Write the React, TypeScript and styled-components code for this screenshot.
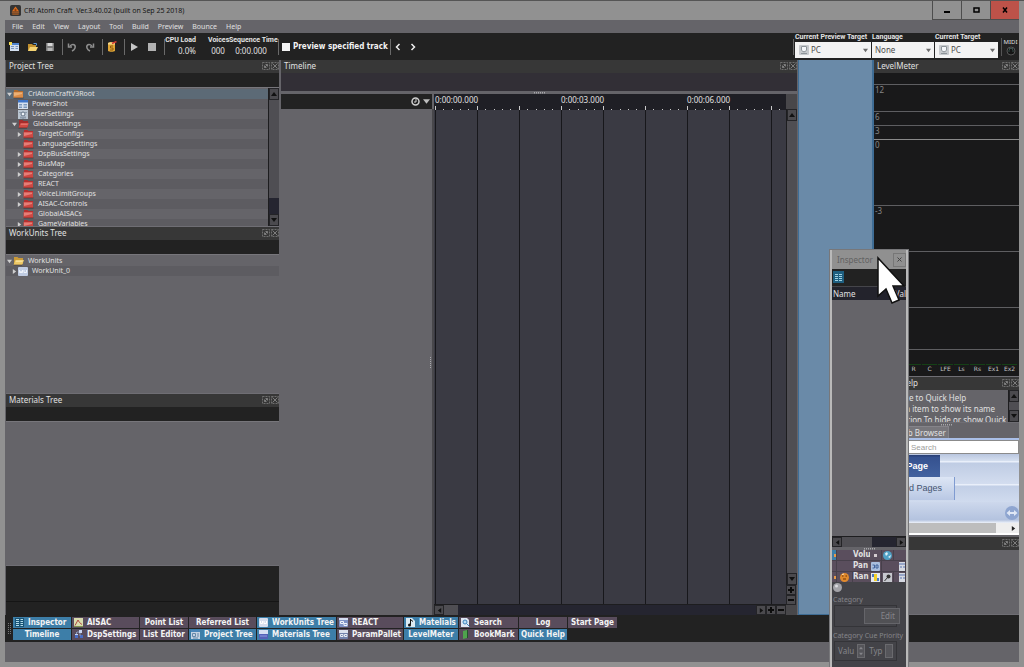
import React from "react";
import styled, { createGlobalStyle, css } from "styled-components";

const ui = `"Noto Sans", "Open Sans", sans-serif`;
const boldUi = `"DejaVu Sans Condensed", "DejaVu Sans", sans-serif`;
const tiny = `Roboto, "Liberation Sans", sans-serif`;

const c = {
  frame: "#919191",
  panel: "#656469",
  panelDark: "#5d5c61",
  header: "#373737",
  dark: "#222222",
  darker: "#19191a",
  grid: "#3a3a43",
  text: "#e0e0e0",
  blue: "#6a8aa8",
  active: "#3d7ea8",
  idle: "#594c5c",
  line: "#6f6e74",
};

const Global = createGlobalStyle`
  * { box-sizing: border-box; }
  html, body { margin: 0; padding: 0; }
  body { background: ${c.panel}; color: ${c.text}; font: 8px/10px ${ui}; }
  button, input, select { font: inherit; color: inherit; margin: 0; padding: 0; border: 0; background: none; border-radius: 0; }
  ul { list-style: none; margin: 0; padding: 0; }
  svg { display: block; flex: none; }
`;

/* ---------- window ---------- */

const Window = styled.div`
  position: relative;
  display: flex;
  flex-direction: column;
  min-height: 100vh;
  overflow: hidden;
  padding: 0 5px 5px;
  background: ${c.frame};
  border-top: 1px solid #555;
`;

const TitleBar = styled.header`
  display: flex;
  height: 19px;
  align-items: center;
  gap: 3px;
  padding-left: 5px;
  color: #161616;
  font: 7px/10px ${ui};
  white-space: pre;
`;

const TitleText = styled.h1`
  flex: 1;
  margin: 0;
  font: inherit;
`;

const WindowButtons = styled.div`
  display: flex;
  align-self: stretch;
`;

const WindowButton = styled.button<{ $close?: boolean }>`
  display: grid;
  place-items: center;
  width: 29px;
  border: 1px solid #4d4d4d;
  border-width: 0 0 1px 1px;
  background: ${(p) => (p.$close ? "#bd5249" : "transparent")};
  color: #000;
`;

const MenuBar = styled.nav`
  display: flex;
  height: 13px;
  align-items: center;
  gap: 9px;
  padding-left: 7px;
  background: ${c.panel};
  font: 7px/10px ${ui};
`;

/* ---------- toolbar ---------- */

const Toolbar = styled.div`
  display: flex;
  height: 27px;
  align-items: center;
  background: ${c.dark};
`;

const ToolGroup = styled.div`
  display: flex;
  gap: 6px;
  padding: 0 6px 0 3px;
`;

const ToolButton = styled.button`
  display: grid;
  place-items: center;
  width: 12px;
  height: 14px;
`;

const Divider = styled.span`
  width: 1px;
  height: 16px;
  background: #6a6a6a;
`;

const Stat = styled.div<{ $width: number; $centered?: boolean }>`
  width: ${(p) => p.$width}px;
  margin-left: ${(p) => (p.$centered ? 1 : 0)}px;
  text-align: ${(p) => (p.$centered ? "center" : "right")};
  font: 8px/12px ${ui};
`;

const Stats = styled.div`
  display: flex;
  padding-right: 5px;
  > :nth-child(2) { margin-left: 12px; }
`;

const SmallLabel = styled.span`
  display: block;
  font: bold 7px/9px ${tiny};
  white-space: nowrap;
  color: #e4e4e4;
`;

const TrackCheck = styled.label`
  display: flex;
  align-items: center;
  gap: 3px;
  padding: 0 2px 0 3px;
  font: bold 8px/12px ${boldUi};
  color: #f2f2f2;
  input {
    appearance: none;
    width: 8px;
    height: 8px;
    background: #f4f4f4;
  }
`;

const StepGroup = styled.div`
  display: flex;
  gap: 3px;
  padding-left: 1px;
`;

const Spacer = styled.div`
  flex: 1;
`;

const Field = styled.label<{ $width: number }>`
  display: block;
  width: ${(p) => p.$width}px;
  margin-left: 1px;
  align-self: flex-end;
`;

const SelectBox = styled.span`
  position: relative;
  display: flex;
  align-items: center;
  height: 16px;
  margin-bottom: 2px;
  background: #f3f3f3;
  > svg:first-child { position: absolute; left: 4px; }
  > svg:last-child { position: absolute; right: 3px; pointer-events: none; }
`;

const Select = styled.select<{ $icon?: boolean }>`
  appearance: none;
  width: 100%;
  height: 16px;
  padding-left: ${(p) => (p.$icon ? 16 : 3)}px;
  font: 8px/16px ${ui};
  color: #4c4c4c;
`;

const Midi = styled.div`
  display: flex;
  flex-direction: column;
  align-items: center;
  margin-left: 3px;
  width: 18px;
  font: 6px/8px ${ui};
  border-left: 1px solid #555;
`;

/* ---------- docks ---------- */

const Docks = styled.main`
  flex: 1 1 555px;
  display: grid;
  grid-template-columns: 273px minmax(0, 1fr) 76px 145px;
  padding-left: 1px;
  min-height: 555px;
  background: ${c.panel};
`;

const Column = styled.div`
  display: flex;
  flex-direction: column;
  min-width: 0;
  min-height: 0;
`;

const Panel = styled.section<{ $size: number }>`
  display: flex;
  flex-direction: column;
  flex: ${(p) => `${p.$size} 1 ${p.$size}px`};
  min-height: 0;
  overflow: hidden;
  border-bottom: 1px solid ${c.line};
`;

const Header = styled.div`
  display: flex;
  flex: none;
  height: 13px;
  align-items: flex-start;
  gap: 1px;
  padding: 2px 0 0 3px;
  background: ${c.header};
  h2 { flex: 1; margin: -1px 0 0; font: 8px/10px ${ui}; white-space: nowrap; }
`;

const DockButton = styled.button`
  display: block;
`;

const Strip = styled.div<{ $height: number }>`
  flex: none;
  height: ${(p) => p.$height}px;
  background: ${c.dark};
`;

const TreeArea = styled.div`
  display: flex;
  flex: 1;
  min-height: 0;
  overflow: hidden;
  border-top: 1px solid #77767b;
`;

const Tree = styled.ul`
  flex: 1;
  padding-top: 1px;
  font: 7px/10px ${ui};
`;

const TreeRow = styled.li<{ $depth: number; $selected?: boolean }>`
  display: flex;
  align-items: center;
  height: 10px;
  gap: 1px;
  padding-left: ${(p) => 1 + p.$depth * 5}px;
  background: ${(p) => (p.$selected ? "#5c6a76" : c.panel)};
  &:nth-child(even) { background: ${c.panelDark}; }
  span { margin-left: 3px; }
`;

const DarkFooter = styled.div`
  flex: none;
  height: 49px;
  padding-top: 35px;
  background: ${c.dark};
  &::before { content: ""; display: block; border-top: 1px solid #151515; }
`;

/* ---------- scroll bars ---------- */

const ScrollButton = styled.button`
  display: grid;
  place-items: center;
  flex: none;
  width: 10px;
  height: 10px;
  background: #4b4a4e;
  border: 1px solid #242427;
  color: #111;
`;

const Scroll = styled.div<{ $vertical?: boolean }>`
  display: flex;
  flex: none;
  background: #252530;
  ${(p) =>
    p.$vertical
      ? css`flex-direction: column; width: 11px; border-left: 1px solid #1d1d1f; ${ScrollButton} { height: 12px; }`
      : css`height: 11px; border-top: 1px solid #1d1d1f;`}
`;

const Thumb = styled.div<{ $grow: number }>`
  flex: ${(p) => p.$grow} 1 0;
  background: #4f4e53;
`;

const Track = styled.div<{ $grow: number }>`
  flex: ${(p) => p.$grow} 1 0;
`;

/* ---------- timeline ---------- */

const Center = styled(Column)`
  padding: 0 1px 0 2px;
`;

const TimelineStrip = styled.div`
  height: 18px;
  background: #322f36;
`;

const Splitter = styled.div`
  display: grid;
  place-items: center;
  flex: none;
  height: 3px;
`;

const TimelineBody = styled.div`
  display: grid;
  flex: 1;
  grid-template-columns: 153px minmax(0, 1fr) 11px;
  min-height: 0;
`;

const TrackHead = styled.div`
  display: flex;
  justify-content: flex-end;
  align-items: center;
  gap: 3px;
  height: 15px;
  margin-right: 2px;
  padding-right: 2px;
  background: ${c.dark};
`;

const TrackList = styled.div`
  display: grid;
  grid-template-rows: 15px 1fr;
`;

const TrackSpace = styled.div`
  display: grid;
  justify-content: end;
  align-content: center;
  border-right: 2px solid #48474b;
`;

const Ruler = styled.div`
  display: flex;
  flex-direction: column;
  justify-content: space-between;
  height: 16px;
  background: #1f1f25;
  overflow: hidden;
`;

const RulerLabels = styled.div`
  display: flex;
  span { flex: 0 0 126px; padding-left: 1px; font: 8px/12px ${ui}; }
`;

const TimeGrid = styled.div`
  flex: 1;
  background: repeating-linear-gradient(90deg, #17171b 0 1px, ${c.grid} 1px 42px);
  border-left: 1px solid ${c.grid};
`;

const TimelineEnd = styled.div`
  display: flex;
  flex-direction: column;
  padding: 15px 0 10px;
  background: #48474a;
  > :first-child { flex: 1; }
`;

const BlueGap = styled.div`
  background: ${c.blue};
  border: 1px solid #3f6d95;
  border-width: 0 2px 1px 1px;
`;

/* ---------- level meter ---------- */

const Meter = styled.div`
  display: flex;
  flex: 1;
  flex-direction: column;
  background: ${c.darker};
  color: #868686;
  font: 8px/10px ${ui};
`;

const Mark = styled.div<{ $size: number; $strong?: boolean; $bare?: boolean }>`
  flex: ${(p) => `${p.$size} 1 ${p.$size}px`};
  min-height: 0;
  padding-left: 1px;
  border-top: ${(p) => (p.$bare ? 0 : 1)}px solid ${(p) => (p.$strong ? "#8a8a8a" : "#5e5e61")};
`;

const Channels = styled.div`
  display: grid;
  grid-template-columns: repeat(8, minmax(0, 1fr));
  gap: 1px;
  height: 12px;
  padding: 0 2px 0 16px;
  span {
    border-top: 1px solid #154016;
    text-align: center;
    color: #c4c4c4;
    font: 6px/8px "DejaVu Sans", sans-serif;
  }
`;

/* ---------- help and browser ---------- */

const HelpBody = styled.div`
  display: flex;
  flex: 1;
  min-height: 0;
  overflow: hidden;
  p { flex: 1; margin: 0; padding: 2px 0 0 5px; font: 8px/11px ${ui}; white-space: pre; overflow: hidden; }
`;

const Browser = styled.section`
  flex: none;
  height: 111px;
  overflow: hidden;
`;

const Tab = styled.button`
  display: block;
  height: 12px;
  margin-left: 19px;
  padding: 0 2px;
  background: #77767b;
  border: 1px solid #85848a;
  border-bottom: 0;
  font: 8px/10px ${ui};
`;

const WebPage = styled.div`
  height: 97px;
  border-top: 2px solid #aabfe8;
  background:
    linear-gradient(#b9c6df, #d6e0f0) 0 14px / 100% 7px no-repeat,
    linear-gradient(#e9effa 0 1px, #bfcce4 2px, #d3ddef) 0 21px / 100% 23px no-repeat,
    linear-gradient(#e9effa 0 1px, #c2cfe6 2px, #d0dbee) 0 44px / 100% 18px no-repeat,
    #fff;
`;

const SearchInput = styled.input`
  display: block;
  width: 100%;
  height: 14px;
  padding-left: 37px;
  border: 1px solid #8b8b8b;
  border-left: 0;
  background: #fff;
  font: 8px/12px "Liberation Sans", sans-serif;
  &::placeholder { color: #9d9d9d; opacity: 1; }
`;

const PageLink = styled.a<{ $current?: boolean }>`
  display: block;
  width: ${(p) => (p.$current ? 66 : 81)}px;
  height: ${(p) => (p.$current ? 22 : 23)}px;
  padding-right: 12px;
  text-align: right;
  text-decoration: none;
  white-space: nowrap;
  font: ${(p) => (p.$current ? "bold " : "")}9px/22px "Liberation Sans", sans-serif;
  color: ${(p) => (p.$current ? "#fff" : "#43536f")};
  background: ${(p) =>
    p.$current ? "linear-gradient(#2a4178 0 1px, #35518f 2px, #42629f)" : "linear-gradient(#dde6f5, #b9c8e4)"};
  border-right: ${(p) => (p.$current ? 0 : 1)}px solid #7f9bd1;
`;

const PageLinks = styled.div`
  padding-top: 1px;
`;

const PageBar = styled.div`
  display: flex;
  justify-content: flex-end;
  align-items: center;
  height: 21px;
  margin-top: 2px;
  background: linear-gradient(#cdd8ec, #b4c3df 85%, #eef2fa);
`;

const PageScroll = styled.div`
  display: flex;
  height: 10px;
  background: #eeeeee;
  button { width: 23px; display: grid; place-items: center; padding-left: 12px; color: #222; }
  div { flex: 1; background: #bdbdbd; }
`;

/* ---------- bottom bar ---------- */

const PanelBar = styled.footer`
  display: flex;
  gap: 1px;
  height: 27px;
  padding: 2px 0 0 2px;
  background: ${c.dark};
`;

const Toggles = styled.div`
  display: grid;
  grid-auto-flow: column;
  grid-template-rows: 11px 11px;
  grid-template-columns: 58px 67px 48px 67px 79px 66px 54px 59px 48px 49px;
  gap: 1px;
`;

const Toggle = styled.button<{ $on?: boolean }>`
  display: flex;
  align-items: center;
  justify-content: center;
  gap: 4px;
  overflow: hidden;
  background: ${(p) => (p.$on ? c.active : c.idle)};
  font: bold 8px/11px ${boldUi};
  color: #f4f4f4;
  white-space: nowrap;
  &[data-icon="true"] { justify-content: flex-start; padding-left: 2px; }
`;

const Status = styled.div`
  height: 20px;
  background: ${c.panel};
`;

/* ---------- floating inspector ---------- */

const Floating = styled.aside`
  position: absolute;
  top: 248px;
  right: 115px;
  bottom: 0;
  display: flex;
  flex-direction: column;
  width: 80px;
  overflow: hidden;
  border: 1px solid #77777a;
  border-bottom: 0;
  background: #b9b9b9;
  padding: 0 2px;
`;

const FloatTitle = styled.div`
  display: flex;
  flex: none;
  align-items: center;
  justify-content: space-between;
  height: 19px;
  padding-left: 5px;
  background: #909090;
  color: #626262;
  button { display: grid; place-items: center; width: 13px; height: 14px; border: 1px solid #777; }
`;

const FloatTools = styled.div`
  flex: none;
  height: 17px;
  padding: 2px 1px;
  background: ${c.dark};
`;

const FloatHead = styled.div`
  display: flex;
  flex: none;
  justify-content: space-between;
  height: 14px;
  padding-left: 1px;
  background: #23232c;
  border-top: 1px solid #45454a;
  font: 8px/13px ${ui};
`;

const FloatBody = styled.div`
  flex: 1;
  min-height: 0;
  background: ${c.panel};
`;

const FloatSplit = styled.div`
  display: grid;
  flex: none;
  place-items: center;
  height: 3px;
  background: ${c.panel};
`;

const ParamGrid = styled.div`
  display: grid;
  flex: none;
  grid-template-columns: 5px 16px 17px 12px 12px 1fr;
  grid-auto-rows: 10px;
  gap: 1px 0;
  align-items: center;
  overflow: hidden;
  background: #47404b;
  font: bold 8px/10px ${boldUi};
  > * { height: 10px; background: #5a4e5d; white-space: nowrap; display: flex; align-items: center; }
  > button { border-right: 1px solid #47404b; overflow: hidden; }
`;

const ParamCell = styled.button<{ $on?: boolean; $inset?: number }>`
  && {
    background: ${(p) => (p.$on ? c.active : "#5a4e5d")};
    padding-left: ${(p) => p.$inset ?? 1}px;
  }
`;

const Form = styled.div`
  flex: none;
  height: 85px;
  overflow: hidden;
  padding: 1px 0 0 1px;
  background: #434348;
  color: #85858a;
  font: 7px/10px ${ui};
`;

const Caption = styled.div`
  padding-top: 3px;
  white-space: nowrap;
`;

const Group = styled.div<{ $height: number }>`
  display: flex;
  align-items: center;
  width: 63px;
  height: ${(p) => p.$height}px;
  margin: 0 0 1px 1px;
  padding-left: 3px;
  border: 1px solid #343438;
  font: 8px/12px ${ui};
`;

const EditButton = styled.button`
  flex: none;
  width: 36px;
  height: 16px;
  margin-left: 26px;
  padding-right: 4px;
  text-align: right;
  background: #515155;
  border: 1px solid #65656a;
`;

const Spin = styled.span`
  display: grid;
  flex: none;
  place-items: center;
  width: 8px;
  height: 14px;
  margin: 0 4px 0 3px;
  border: 1px solid #6a6a6e;
  background: #55555a;
`;

const Cursor = styled.svg`
  position: absolute;
  top: 255px;
  right: 116px;
  pointer-events: none;
`;

/* ---------- drawings ---------- */

const Arrow = ({ dir, size = 5, fill = "currentColor" }: { dir: "up" | "down" | "left" | "right"; size?: number; fill?: string }) => {
  const d = { up: "M3 1 6 5H0z", down: "M0 1h6L3 5z", left: "M5 0v6L1 3z", right: "M1 0v6l4-3z" }[dir];
  return (
    <svg width={size} height={size} viewBox="0 0 6 6">
      <path d={d} fill={fill} />
    </svg>
  );
};

const DockButtons = () => (
  <>
    <DockButton aria-label="Float panel">
      <svg width="8" height="8" viewBox="0 0 8 8" fill="none" stroke="#7c7c7c">
        <path d="M.5.5h7v7h-7z" strokeDasharray="2 1" strokeOpacity=".8" />
        <path d="M3.500 2.500h2v2M5.500 2.500l-3 3M2.500 3.500v2h2" />
      </svg>
    </DockButton>
    <DockButton aria-label="Close panel">
      <svg width="8" height="8" viewBox="0 0 8 8" fill="none" stroke="#7c7c7c">
        <path d="M.5.5h7v7h-7z" strokeDasharray="2 1" strokeOpacity=".8" />
        <path d="m1.500 1.500 5 5m0-5-5 5" />
      </svg>
    </DockButton>
  </>
);

const PanelHeader = ({ title }: { title: string }) => (
  <Header>
    <h2>{title}</h2>
    <DockButtons />
  </Header>
);

const Folder = ({ back, light, front, open }: { back: string; light: string; front: string; open?: boolean }) => (
  <svg width="11" height="10" viewBox="0 0 11 10">
    <path d="M1 1h3.500l1 1H10v6H1z" fill={back} />
    <path d={open ? "M2.500 4H11L9 9H.5z" : "M.5 3H10v6H.5z"} fill={front} />
    <path d={open ? "M3 4.500h7l-.5 1.500h-7z" : "M1 3.500h8V5L1 7z"} fill={light} fillOpacity=".6" />
    <path d={open ? "M.5 9H9" : "M.5 9H10.500"} stroke="#2a1818" strokeOpacity=".5" />
  </svg>
);

const icons: Record<string, React.ReactNode> = {
  root: <Folder back="#b06a2c" light="#f7c896" front="#dc8d48" />,
  red: <Folder back="#b52f2f" light="#f5a39b" front="#cd4742" />,
  redOpen: <Folder back="#a52c2c" light="#f08a82" front="#cf4a44" open />,
  yellow: <Folder back="#c99a38" light="#fff0b8" front="#ecc968" open />,
  window: (
    <svg width="10" height="9" viewBox="0 0 10 9">
      <path d="M0 0h10v9H0z" fill="#d6e0ee" />
      <path d="M0 0h10v2.500H0z" fill="#3f74c8" />
      <path d="M1 4h3v1.500H1zM1 6.500h3V8H1zM5.500 4H9v1.500H5.500zM5.500 6.500H9V8H5.500z" fill="#7d98bd" />
    </svg>
  ),
  gear: (
    <svg width="10" height="9" viewBox="0 0 10 9">
      <path d="M0 0h10v9H0z" fill="#b9c4d0" />
      <circle cx="5" cy="4" r="2" fill="#eef3f8" stroke="#617184" />
      <path d="M3 6.500v2M5 7v2M7 6.500v2M1.500 2l1 1M8.500 2l-1 1" stroke="#617184" />
    </svg>
  ),
  unit: (
    <svg width="10" height="9" viewBox="0 0 10 9">
      <rect width="10" height="9" rx="1" fill="#bfcbe2" />
      <path d="M1.500 3v2.500h1.500V4v1.500h1.500V3M6 3v2.500h2.500V3" stroke="#eef2fa" fill="none" />
    </svg>
  ),
};

const Root = () => (
  <svg width="11" height="11" viewBox="0 0 12 12">
    <rect width="12" height="12" rx="2" fill="#343434" />
    <path d="M6 1.500 10 7H2z" fill="#e0701f" />
    <path d="M6 4v3M4.500 5.500h3" stroke="#8d3d0c" />
    <path d="M2 8.500h8M2.500 10h7" stroke="#c86722" />
  </svg>
);

const MiniIcon = ({ kind }: { kind: string }) => (
  <svg width="9" height="9" viewBox="0 0 9 9">
    {kind === "list" && (
      <>
        <path d="M0 0h9v9H0z" fill="#195476" />
        <path d="M1 1.500h3M1 3.500h3M1 5.500h3M1 7.500h3M5.500 1.500H8M5.500 3.500H8M5.500 5.500H8M5.500 7.500H8" stroke="#b4dcea" />
      </>
    )}
    {kind === "curve" && (
      <>
        <path d="M0 0h9v9H0z" fill="#d9dcae" />
        <path d="M1 7.500 4 2l1.500 2.500L8 6.500" stroke="#b1483e" fill="none" />
        <path d="M0 8.500h9" stroke="#7d8f4d" />
      </>
    )}
    {kind === "nodes" && (
      <>
        <path d="M5 0h3v3H5zM1 4h3v4H1z" fill="#c9d6f2" />
        <path d="M1 5h3v3H1zM6 5h3v3H6z" fill="#476bc4" />
        <path d="M3 2h2M2.500 4V2M6 3v3" stroke="#8897b8" />
      </>
    )}
    {kind === "window" && (
      <>
        <path d="M0 0h9v9H0z" fill="#c4d2e2" />
        <path d="M0 0h9v2H0z" fill="#4b86b8" />
        <path d="M1.500 3.500h3v3h-3zM6 4h2M6 6h2M2 8h5" stroke="#6688a8" fill="none" />
      </>
    )}
    {kind === "unit" && (
      <>
        <rect width="9" height="9" rx="1" fill="#d7deee" />
        <path d="M1.500 3v2.500h2V3M5 3v2.500h2.500V3" stroke="#fff" fill="none" />
      </>
    )}
    {kind === "wave" && (
      <>
        <rect width="9" height="9" rx="1" fill="#5560b8" />
        <path d="M0 0h9v4H0z" fill="#d6def3" />
        <path d="M1 6h7" stroke="#8f9be0" />
      </>
    )}
    {kind === "react" && (
      <>
        <rect width="9" height="9" rx="1" fill="#7f93c6" />
        <path d="M0 0h9v2H0z" fill="#d5def2" />
        <path d="M1.500 3.500h3v2h-3zM5 5.500h3v2H5z" stroke="#eef2fb" fill="none" />
      </>
    )}
    {kind === "param" && (
      <>
        <rect width="9" height="9" rx="1" fill="#7382ad" />
        <path d="M0 0h9v3H0z" fill="#dbe1ef" />
        <path d="M1.500 4.500H4v2H1.500zM5.500 4.500H8v2H5.500z" stroke="#e9edf6" fill="none" />
      </>
    )}
    {kind === "note" && (
      <>
        <path d="M0 0h6l3 3v6H0z" fill="#dcebf3" />
        <path d="M4.500 1v5.500M4.500 1.500 7 3.500" stroke="#111" fill="none" />
        <circle cx="3.500" cy="7" r="1.500" fill="#111" />
      </>
    )}
    {kind === "search" && (
      <>
        <path d="M0 0h6l2 2v7H0z" fill="#dfe8f4" />
        <circle cx="4" cy="4" r="2" stroke="#3f83bd" fill="#b9dcf3" />
        <path d="m5.500 5.500 3 3" stroke="#3f83bd" />
      </>
    )}
    {kind === "book" && (
      <>
        <path d="M2 1 6 0v8L2 9z" fill="#4fa34d" />
        <path d="M6 0h1v8H6z" fill="#20552a" />
      </>
    )}
    {kind === "dot" && <path d="M3 3h3v3H3z" fill="#d4ccd0" />}
    {kind === "globe" && (
      <>
        <circle cx="4.500" cy="4.500" r="4.500" fill="#4f9fc4" />
        <path d="M2 2.500 4 1l1 2-2 2zM5 6l3-2-1 3z" fill="#dff1f8" />
      </>
    )}
    {kind === "pan" && (
      <>
        <rect width="9" height="9" rx="1" fill="#a9bedd" />
        <path d="M1.500 3h2v3h-2M5 3h2v3H5z" stroke="#41629b" fill="none" />
      </>
    )}
    {kind === "face" && (
      <>
        <circle cx="4.500" cy="4.500" r="4.500" fill="#e08a2d" />
        <path d="M2 3h1.500M5.500 3H7M3 6h3" stroke="#6e3200" />
        <path d="M2 1.500 4 1" stroke="#ffe2b4" />
      </>
    )}
    {kind === "mix" && (
      <>
        <path d="M0 0h9v9H0z" fill="#e6e9f0" />
        <path d="M1 1h3v3H1zM5 5h3v3H5z" fill="#4a79c8" />
        <path d="M3 1h3v7H3z" fill="#f1cf2c" />
      </>
    )}
    {kind === "mic" && (
      <>
        <path d="M0 0h9v9H0z" fill="#c6c8ce" />
        <circle cx="5.500" cy="3.500" r="2" fill="#333" />
        <path d="M4.500 4.500 1.500 8" stroke="#333" />
      </>
    )}
    {kind === "bars" && (
      <>
        <path d="M0 0h9v9H0z" fill="#d6d9e2" />
        <path d="M0 2h9M1 5h2M4 5h2M7 5h2" stroke="#5a74b0" />
      </>
    )}
    {kind === "key" && <path d="M0 3h2v3H0z" fill="#e79a4a" />}
  </svg>
);

const Grip = () => (
  <svg width="11" height="3" viewBox="0 0 11 3">
    <path d="M0 1.500h11" stroke="#a8a8ac" strokeDasharray="1 1" />
    <path d="M0 2.500h11" stroke="#a8a8ac" strokeDasharray="1 1" opacity=".5" />
  </svg>
);

const Sign = ({ plus }: { plus?: boolean }) => (
  <svg width="6" height="6">
    <path d={plus ? "M0 3h6M3 0v6" : "M0 3h6"} stroke="#0c0c0c" strokeWidth="2" />
  </svg>
);

const Device = () => (
  <svg width="10" height="10" viewBox="0 0 10 10">
    <rect width="10" height="10" rx="1" fill="#c6c9cc" />
    <path d="M2 1h6v5H2z" fill="#f5f7f9" />
    <path d="M2.500 1.500h5v4L5 7 2.500 5.500z" stroke="#8d9499" fill="none" />
    <path d="M2 8.500h6" stroke="#8d9499" />
  </svg>
);

const VScroll = ({ thumb, rest }: { thumb: number; rest: number }) => (
  <Scroll $vertical>
    <ScrollButton aria-label="Scroll up"><Arrow dir="up" size={6} /></ScrollButton>
    <Thumb $grow={thumb} />
    <Track $grow={rest} />
    <ScrollButton aria-label="Scroll down"><Arrow dir="down" size={6} /></ScrollButton>
  </Scroll>
);

/* ---------- data ---------- */

const menus = ["File", "Edit", "View", "Layout", "Tool", "Build", "Preview", "Bounce", "Help"];

type Node = { label: string; icon: string; depth: number; state?: "open" | "closed"; selected?: boolean };

const project: Node[] = [
  { label: "CriAtomCraftV3Root", icon: "root", depth: 0, state: "open", selected: true },
  { label: "PowerShot", icon: "window", depth: 1 },
  { label: "UserSettings", icon: "gear", depth: 1 },
  { label: "GlobalSettings", icon: "redOpen", depth: 1, state: "open" },
  { label: "TargetConfigs", icon: "red", depth: 2, state: "closed" },
  { label: "LanguageSettings", icon: "red", depth: 2 },
  { label: "DspBusSettings", icon: "red", depth: 2, state: "closed" },
  { label: "BusMap", icon: "red", depth: 2, state: "closed" },
  { label: "Categories", icon: "red", depth: 2, state: "closed" },
  { label: "REACT", icon: "red", depth: 2 },
  { label: "VoiceLimitGroups", icon: "red", depth: 2, state: "closed" },
  { label: "AISAC-Controls", icon: "red", depth: 2, state: "closed" },
  { label: "GlobalAISACs", icon: "red", depth: 2 },
  { label: "GameVariables", icon: "red", depth: 2, state: "closed" },
];

const workUnits: Node[] = [
  { label: "WorkUnits", icon: "yellow", depth: 0, state: "open" },
  { label: "WorkUnit_0", icon: "unit", depth: 1, state: "closed" },
];

const marks = [
  { label: "", size: 11, bare: true },
  { label: "12", size: 27 },
  { label: "6", size: 14 },
  { label: "3", size: 14 },
  { label: "0", size: 66, strong: true },
  { label: "-3", size: 46 },
  { label: "", size: 56 },
  { label: "", size: 42 },
  { label: "", size: 15 },
];

const toggles: { label: string; on?: boolean; icon?: string }[] = [
  { label: "Inspector", on: true, icon: "list" },
  { label: "Timeline", on: true },
  { label: "AISAC", icon: "curve" },
  { label: "DspSettings", icon: "nodes" },
  { label: "Point List" },
  { label: "List Editor" },
  { label: "Referred List" },
  { label: "Project Tree", on: true, icon: "window" },
  { label: "WorkUnits Tree", on: true, icon: "unit" },
  { label: "Materials Tree", on: true, icon: "wave" },
  { label: "REACT", icon: "react" },
  { label: "ParamPallet", icon: "param" },
  { label: "Matelials", on: true, icon: "note" },
  { label: "LevelMeter", on: true },
  { label: "Search", icon: "search" },
  { label: "BookMark", icon: "book" },
  { label: "Log" },
  { label: "Quick Help", on: true },
  { label: "Start Page" },
];

const TreeView = ({ nodes }: { nodes: Node[] }) => (
  <Tree>
    {nodes.map((n) => (
      <TreeRow key={n.label} $depth={n.depth} $selected={n.selected}>
        <Arrow dir={n.state === "open" ? "down" : "right"} fill={n.state ? "#cfcfcf" : "none"} />
        {icons[n.icon]}
        <span>{n.label}</span>
      </TreeRow>
    ))}
  </Tree>
);

const TargetSelect = ({ label, width, value, icon }: { label: string; width: number; value: string; icon?: boolean }) => (
  <Field $width={width}>
    <SmallLabel>{label}</SmallLabel>
    <SelectBox>
      {icon ? <Device /> : null}
      <Select $icon={icon} defaultValue={value}>
        <option>{value}</option>
      </Select>
      <Arrow dir="down" fill="#6b6b6b" />
    </SelectBox>
  </Field>
);

export default function App() {
  return (
    <Window>
      <Global />
      <TitleBar>
        <Root />
        <TitleText>{"CRI Atom Craft  Ver.3.40.02 (built on Sep 25 2018)"}</TitleText>
        <WindowButtons>
          <WindowButton aria-label="Minimize">
            <svg width="8" height="8"><path d="M1 5h6v2H1z" /></svg>
          </WindowButton>
          <WindowButton aria-label="Maximize">
            <svg width="8" height="8"><path d="M2 2h5v4H2z" fill="none" stroke="#000" strokeWidth="1.500" /></svg>
          </WindowButton>
          <WindowButton $close aria-label="Close">
            <svg width="8" height="8"><path d="m2 1.500 4 5m0-5-4 5" stroke="#000" strokeWidth="1.500" /></svg>
          </WindowButton>
        </WindowButtons>
      </TitleBar>

      <MenuBar>
        {menus.map((m) => (
          <button key={m}>{m}</button>
        ))}
      </MenuBar>

      <Toolbar>
        <ToolGroup>
          <ToolButton aria-label="New project">
            <svg width="11" height="10" viewBox="0 0 11 10">
              <path d="M1 1h9v8H1z" fill="#d3dfef" />
              <path d="M1 1h9v2H1z" fill="#4f84cf" />
              <path d="M2 4.500h3M2 6.500h3M6.500 4.500H9M6.500 6.500H9" stroke="#7896bf" />
              <path d="M0 0h3v3H0z" fill="#f5de54" />
            </svg>
          </ToolButton>
          <ToolButton aria-label="Open project">
            <svg width="11" height="10" viewBox="0 0 11 10">
              <path d="M1 2h4l1 1h3v6H1z" fill="#c1902f" />
              <path d="M3 5h8L9 9H1z" fill="#f3d272" />
              <path d="M6.500 1.500h3v2" stroke="#5d9bd6" fill="none" />
            </svg>
          </ToolButton>
          <ToolButton aria-label="Save">
            <svg width="10" height="10" viewBox="0 0 10 10">
              <path d="M1 1h8v8H1z" fill="#7d7d7d" />
              <path d="M2.500 1h5v3h-5z" fill="#d8d8d8" />
              <path d="M2.500 6h5v3h-5z" fill="#b6b6b6" />
            </svg>
          </ToolButton>
        </ToolGroup>
        <Divider />
        <ToolGroup>
          <ToolButton aria-label="Undo">
            <svg width="10" height="10" viewBox="0 0 10 10" fill="none" stroke="#8e8e8e" strokeWidth="1.500">
              <path d="M3 4c3-3 6-1 5 2-.5 1.500-2 2.500-3 3" />
              <path d="M1.500 1.500v3.500h3.500" />
            </svg>
          </ToolButton>
          <ToolButton aria-label="Redo">
            <svg width="10" height="10" viewBox="0 0 10 10" fill="none" stroke="#8e8e8e" strokeWidth="1.500">
              <path d="M7 4C4 1 1 3 2 6c.5 1.500 2 2.500 3 3" />
              <path d="M8.500 1.500v3.500H5" />
            </svg>
          </ToolButton>
        </ToolGroup>
        <Divider />
        <ToolGroup>
          <ToolButton aria-label="Build">
            <svg width="10" height="11" viewBox="0 0 10 11">
              <path d="M1 2c1-1 6-1 7 0v8c-1 1-6 1-7 0z" fill="#e0a636" />
              <path d="M1 2c1-1 6-1 7 0v1.500H1z" fill="#f5d98b" />
              <path d="M6 5H3.500v2H6v2H3" stroke="#8d5b10" fill="none" />
              <path d="M5 2.500 9.500.5" stroke="#d33a30" strokeWidth="1.500" />
            </svg>
          </ToolButton>
        </ToolGroup>
        <Divider />
        <ToolGroup>
          <ToolButton aria-label="Play">
            <svg width="10" height="10"><path d="m2 1 7 4-7 4z" fill="#c6c6c6" /></svg>
          </ToolButton>
          <ToolButton aria-label="Stop">
            <svg width="10" height="10"><path d="M1 1h8v8H1z" fill="#b2b2b2" /></svg>
          </ToolButton>
        </ToolGroup>
        <Divider />
        <Stats>
          <Stat $width={31}><SmallLabel>CPU Load</SmallLabel>0.0%</Stat>
          <Stat $width={20} $centered><SmallLabel>Voices</SmallLabel>000</Stat>
          <Stat $width={44} $centered><SmallLabel>Sequence Time</SmallLabel>0:00.000</Stat>
        </Stats>
        <Divider />
        <TrackCheck><input type="checkbox" />Preview specified track</TrackCheck>
        <Divider />
        <StepGroup>
          <ToolButton aria-label="Previous track">
            <svg width="6" height="8"><path d="M4.500 1 1.500 4l3 3" stroke="#eee" strokeWidth="1.500" fill="none" /></svg>
          </ToolButton>
          <ToolButton aria-label="Next track">
            <svg width="6" height="8"><path d="m1.500 1 3 3-3 3" stroke="#eee" strokeWidth="1.500" fill="none" /></svg>
          </ToolButton>
        </StepGroup>
        <Spacer />
        <Divider />
        <TargetSelect label="Current Preview Target" width={76} value="PC" icon />
        <TargetSelect label="Language" width={62} value="None" />
        <TargetSelect label="Current Target" width={63} value="PC" icon />
        <Midi>
          MIDI
          <svg width="10" height="10" viewBox="0 0 10 10">
            <circle cx="5" cy="5" r="4" fill="#151515" stroke="#555" />
            <path d="M2.500 5h1M6.500 5h1M3 3h1M6 3h1M4.500 2.500h1" stroke="#5d8a80" />
          </svg>
        </Midi>
      </Toolbar>

      <Docks>
        <Column>
          <Panel $size={167}>
            <PanelHeader title="Project Tree" />
            <Strip $height={14} />
            <TreeArea>
              <TreeView nodes={project} />
              <VScroll thumb={99} rest={16} />
            </TreeArea>
          </Panel>
          <Panel $size={167}>
            <PanelHeader title="WorkUnits Tree" />
            <Strip $height={14} />
            <TreeArea><TreeView nodes={workUnits} /></TreeArea>
          </Panel>
          <Panel $size={172}>
            <PanelHeader title="Materials Tree" />
            <Strip $height={14} />
            <TreeArea />
          </Panel>
          <DarkFooter />
        </Column>

        <Center>
          <PanelHeader title="Timeline" />
          <TimelineStrip />
          <Splitter><Grip /></Splitter>
          <TimelineBody>
            <TrackList>
              <TrackHead>
                <svg width="9" height="9" viewBox="0 0 9 9" fill="none" stroke="#d0d0d0">
                  <circle cx="4.500" cy="4.500" r="3.500" strokeWidth="1.500" />
                  <path d="M5 2v3H3" />
                </svg>
                <Arrow dir="down" size={7} fill="#bdbdbd" />
              </TrackHead>
              <TrackSpace>
                <svg width="3" height="11"><path d="M1.500 0v11" stroke="#a8a8ac" strokeDasharray="1 1" /></svg>
              </TrackSpace>
            </TrackList>
            <Column>
              <Ruler>
                <RulerLabels>
                  <span>0:00:00.000</span>
                  <span>0:00:03.000</span>
                  <span>0:00:06.000</span>
                </RulerLabels>
                <svg width="100%" height="4">
                  <defs>
                    <pattern id="ticks" width="42" height="4" patternUnits="userSpaceOnUse">
                      <path d="M1 0h1v4H1zM9 3h1v1H9zM18 3h1v1h-1zM26 3h1v1h-1zM34 3h1v1h-1z" fill="#c9c9c9" />
                    </pattern>
                  </defs>
                  <rect width="100%" height="4" fill="url(#ticks)" />
                </svg>
              </Ruler>
              <TimeGrid />
              <Scroll>
                <ScrollButton aria-label="Scroll left"><Arrow dir="left" /></ScrollButton>
                <Thumb $grow={14} />
                <Track $grow={296} />
                <ScrollButton aria-label="Scroll right"><Arrow dir="right" /></ScrollButton>
                <ScrollButton aria-label="Zoom in time"><Sign plus /></ScrollButton>
                <ScrollButton aria-label="Zoom out time"><Sign /></ScrollButton>
              </Scroll>
            </Column>
            <TimelineEnd>
              <VScroll thumb={1} rest={0} />
              <ScrollButton aria-label="Zoom in tracks"><Sign plus /></ScrollButton>
              <ScrollButton aria-label="Zoom out tracks"><Sign /></ScrollButton>
            </TimelineEnd>
          </TimelineBody>
        </Center>

        <BlueGap />

        <Column>
          <Panel $size={317}>
            <PanelHeader title="LevelMeter" />
            <Meter>
              {marks.map((m, i) => (
                <Mark key={i} $size={m.size} $strong={m.strong} $bare={m.bare}>{m.label}</Mark>
              ))}
              <Channels>
                {["L", "R", "C", "LFE", "Ls", "Rs", "Ex1", "Ex2"].map((ch) => <span key={ch}>{ch}</span>)}
              </Channels>
            </Meter>
          </Panel>
          <Panel $size={46}>
            <PanelHeader title="Quick Help" />
            <HelpBody>
              <p>{"Welcome to Quick Help\nPoint an item to show its name\nDescription.To hide or show Quick"}</p>
              <VScroll thumb={1} rest={0} />
            </HelpBody>
          </Panel>
          <Splitter><Grip /></Splitter>
          <Browser>
            <Tab>Web Browser</Tab>
            <WebPage>
              <SearchInput type="search" placeholder="Search" aria-label="Search" />
              <PageLinks>
                <PageLink href="#page" $current>Start Page</PageLink>
                <PageLink href="#pages">Related Pages</PageLink>
              </PageLinks>
              <PageBar>
                <svg width="14" height="14" viewBox="0 0 14 14">
                  <circle cx="7" cy="7" r="7" fill="#8ea5d0" />
                  <path d="M1.500 7 5 4v2h4V4l3.500 3L9 10V8H5v2z" fill="#dfe7f5" />
                </svg>
              </PageBar>
              <PageScroll>
                <div />
                <button aria-label="Scroll right"><Arrow dir="right" /></button>
              </PageScroll>
            </WebPage>
          </Browser>
          <Panel $size={78}>
            <PanelHeader title="" />
          </Panel>
        </Column>
      </Docks>

      <PanelBar>
        <svg width="5" height="24"><path d="M1.500 6v12M3.500 6v12" stroke="#777" strokeDasharray="1 1" /></svg>
        <Toggles>
          {toggles.map((t) => (
            <Toggle key={t.label} $on={t.on} data-icon={!!t.icon} aria-pressed={!!t.on}>
              {t.icon ? <MiniIcon kind={t.icon} /> : null}
              {t.label}
            </Toggle>
          ))}
        </Toggles>
      </PanelBar>
      <Status />

      <Floating>
        <FloatTitle>
          Inspector
          <button aria-label="Close inspector">
            <svg width="5" height="5"><path d="m.5.5 4 4m0-4-4 4" stroke="#444" /></svg>
          </button>
        </FloatTitle>
        <FloatTools>
          <svg width="11" height="12" viewBox="0 0 11 12">
            <path d="M0 0h11v12H0z" fill="#1f5f80" />
            <path d="M2 3.500h3M2 5.500h3M2 7.500h3M2 9.500h3M6 3.500h3M6 5.500h3M6 7.500h3M6 9.500h3" stroke="#9fd0e2" />
          </svg>
        </FloatTools>
        <FloatHead><span>Name</span><span>Val</span></FloatHead>
        <FloatBody />
        <Scroll>
          <ScrollButton aria-label="Scroll left"><Arrow dir="left" /></ScrollButton>
          <Thumb $grow={29} />
          <Track $grow={23} />
          <ScrollButton aria-label="Scroll right"><Arrow dir="right" /></ScrollButton>
        </Scroll>
        <FloatSplit><Grip /></FloatSplit>
        <ParamGrid>
          <ParamCell $on $inset={2} aria-label="Volume curve"><MiniIcon kind="key" /></ParamCell><i /><span>Volu</span>
          <ParamCell aria-label="Point"><MiniIcon kind="dot" /></ParamCell>
          <ParamCell aria-label="World"><MiniIcon kind="globe" /></ParamCell><i />
          <ParamCell aria-label="Pan curve" /><i /><span>Pan</span>
          <ParamCell aria-label="3D pan"><MiniIcon kind="pan" /></ParamCell><i />
          <ParamCell $inset={5} aria-label="Bars"><MiniIcon kind="bars" /></ParamCell>
          <ParamCell $inset={2} aria-label="Random curve"><MiniIcon kind="key" /></ParamCell>
          <ParamCell $inset={3} aria-label="Face"><MiniIcon kind="face" /></ParamCell><span>Ran</span>
          <ParamCell aria-label="Mix"><MiniIcon kind="mix" /></ParamCell>
          <ParamCell aria-label="Microphone"><MiniIcon kind="mic" /></ParamCell>
          <ParamCell $inset={5} aria-label="Levels"><MiniIcon kind="bars" /></ParamCell>
        </ParamGrid>
        <Form>
          <svg width="9" height="9"><circle cx="4.500" cy="4.500" r="4.500" fill="#a3a3a8" /><circle cx="3.500" cy="3" r="1.500" fill="#dcdce0" /></svg>
          <Caption>Category</Caption>
          <Group $height={22}><EditButton>Edit</EditButton></Group>
          <Caption>Category Cue Priority</Caption>
          <Group $height={20}>
            <span>Valu</span>
            <Spin><Arrow dir="up" size={4} fill="#85858a" /><Arrow dir="down" size={4} fill="#85858a" /></Spin>
            <span>Typ</span>
            <Spin />
          </Group>
        </Form>
      </Floating>

      <Cursor width="32" height="50" viewBox="0 0 32 50">
        <path d="M2 2v38l8-7 6 14 7-3-6-14h11z" fill="#fff" stroke="#111" strokeWidth="1.500" />
      </Cursor>
    </Window>
  );
}
